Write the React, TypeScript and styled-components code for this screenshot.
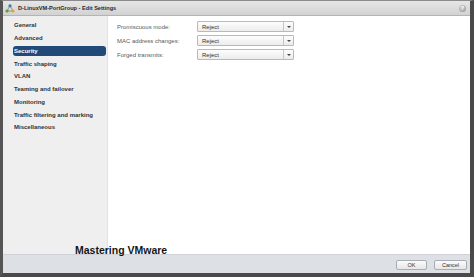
import styled, { createGlobalStyle } from 'styled-components'

const GlobalStyle = createGlobalStyle`
  html, body {
    margin: 0;
    padding: 0;
    width: 474px;
    height: 277px;
    overflow: hidden;
    background: #4d4d4d;
  }
  * {
    box-sizing: border-box;
  }
`

const Window = styled.div`
  position: relative;
  width: 474px;
  height: 277px;
  display: flex;
  flex-direction: column;
  border-left: 3px solid #555;
  border-right: 4px solid #4a4a4a;
  border-bottom: 4px solid #4a4a4a;
  border-top: 1px solid #8a8a8a;
  background: #fff;
  font-family: 'Liberation Sans', Arial, sans-serif;
`

const TitleBar = styled.div`
  height: 15px;
  display: flex;
  align-items: center;
  padding: 0 4px 0 2px;
  gap: 3px;
  background: linear-gradient(#e6e6e6, #d2d2d2);
  border-bottom: 1px solid #b4b4b4;
`

const TitleText = styled.span`
  flex: 1;
  font-size: 5.6px;
  font-weight: bold;
  color: #2a2a2a;
  white-space: nowrap;
`

const HelpIcon = styled.span`
  width: 7px;
  height: 7px;
  border-radius: 50%;
  background: radial-gradient(circle at 40% 35%, #d8d8d8, #8e8e8e);
  color: #fff;
  font-size: 5px;
  font-weight: bold;
  display: flex;
  align-items: center;
  justify-content: center;
`

const Body = styled.div`
  flex: 1;
  display: flex;
  min-height: 0;
`

const Sidebar = styled.div`
  width: 105px;
  background: #efefef;
  border-right: 1px solid #e2e2e2;
  padding: 3px 1px 0 10px;
  display: flex;
  flex-direction: column;
`

const NavItem = styled.div<{ selected?: boolean }>`
  height: 12.75px;
  display: flex;
  align-items: center;
  font-size: 6px;
  font-weight: ${p => (p.selected ? 'bold' : '600')};
  color: ${p => (p.selected ? '#fff' : '#333')};
  white-space: nowrap;

  & > span {
    display: flex;
    align-items: center;
    width: 100%;
    height: 10px;
    padding-left: 1px;
    border-radius: 3px;
    background: ${p => (p.selected ? '#214a78' : 'transparent')};
  }
`

const Main = styled.div`
  flex: 1;
  padding: 5px 0 0 9px;
  display: flex;
  flex-direction: column;
  gap: 3px;
`

const Row = styled.div`
  display: flex;
  align-items: center;
  height: 11px;
`

const Label = styled.span`
  width: 80px;
  font-size: 6px;
  color: #5a5a5a;
  white-space: nowrap;
`

const Select = styled.div`
  width: 97px;
  height: 11px;
  display: flex;
  border: 1px solid #b9b9b9;
  border-radius: 1px;
  background: linear-gradient(#fdfdfd, #ececec);
`

const SelectValue = styled.span`
  flex: 1;
  font-size: 6px;
  color: #333;
  padding-left: 4px;
  display: flex;
  align-items: center;
`

const SelectArrow = styled.span`
  width: 10px;
  border-left: 1px solid #c6c6c6;
  display: flex;
  align-items: center;
  justify-content: center;

  &::after {
    content: '';
    border-left: 2px solid transparent;
    border-right: 2px solid transparent;
    border-top: 2px solid #444;
  }
`

const Footer = styled.div`
  height: 19px;
  background: #dde0e5;
  border-top: 1px solid #cfd2d7;
  display: flex;
  align-items: center;
  justify-content: flex-end;
  gap: 7px;
  padding-right: 3px;
`

const Button = styled.button<{ w: number }>`
  width: ${p => p.w}px;
  height: 10px;
  padding: 0;
  margin-top: 1px;
  border: 1px solid #a9acb2;
  border-radius: 2px;
  background: linear-gradient(#fbfbfb, #e6e6e6);
  font-family: inherit;
  font-size: 5.5px;
  color: #333;
`

const Watermark = styled.div`
  position: absolute;
  left: 72px;
  top: 243px;
  font-size: 10.5px;
  font-weight: bold;
  color: #151515;
  white-space: nowrap;
`

const navItems = [
  'General',
  'Advanced',
  'Security',
  'Traffic shaping',
  'VLAN',
  'Teaming and failover',
  'Monitoring',
  'Traffic filtering and marking',
  'Miscellaneous'
]

const policies = ['Promiscuous mode:', 'MAC address changes:', 'Forged transmits:']

const GroupIcon = () => (
  <svg width="10" height="9" viewBox="0 0 10 9">
    <path d="M5 1.5 L2 7 L8 7 Z" fill="none" stroke="#7a8a6a" strokeWidth="0.8" />
    <circle cx="5" cy="1.8" r="1.6" fill="#3c78b8" />
    <circle cx="2" cy="7" r="1.6" fill="#5aa03c" />
    <circle cx="8" cy="7" r="1.6" fill="#d8a83c" />
  </svg>
)

export default function App() {
  return (
    <>
      <GlobalStyle />
      <Window>
        <TitleBar>
          <GroupIcon />
          <TitleText>D-LinuxVM-PortGroup - Edit Settings</TitleText>
          <HelpIcon>?</HelpIcon>
        </TitleBar>
        <Body>
          <Sidebar>
            {navItems.map(item => (
              <NavItem key={item} selected={item === 'Security'}>
                <span>{item}</span>
              </NavItem>
            ))}
          </Sidebar>
          <Main>
            {policies.map(label => (
              <Row key={label}>
                <Label>{label}</Label>
                <Select>
                  <SelectValue>Reject</SelectValue>
                  <SelectArrow />
                </Select>
              </Row>
            ))}
          </Main>
        </Body>
        <Footer>
          <Button w={31}>OK</Button>
          <Button w={33}>Cancel</Button>
        </Footer>
        <Watermark>Mastering VMware</Watermark>
      </Window>
    </>
  )
}
